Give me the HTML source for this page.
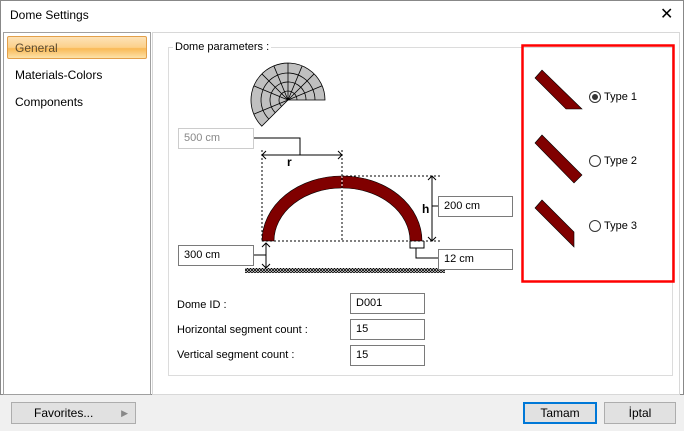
<!DOCTYPE html><html><head><style>
body{margin:0;width:684px;height:431px;background:#f0f0f0;font-family:Tahoma,"Liberation Sans",sans-serif;font-size:11px;color:#000;position:relative;overflow:hidden}
.a{position:absolute}
.box{position:absolute;background:#fff;border:1px solid #7a7a7a;box-sizing:border-box;padding:3px 5px;font-size:11px}
.btn{position:absolute;background:#e1e1e1;border:1px solid #adadad;box-sizing:border-box;text-align:center;line-height:20px;font-size:12px}
</style></head><body>
<div class="a" style="left:0;top:0;width:684px;height:395px;background:#fff;border:1px solid #888;box-sizing:border-box"></div>
<div class="a" style="left:10px;top:8px;font-size:12px">Dome Settings</div>
<div class="a" style="left:660px;top:4px;font-size:16px">✕</div>
<div class="a" style="left:3px;top:32px;width:148px;height:363px;border:1px solid #a0a0a0;box-sizing:border-box;background:#fff"></div>
<div class="a" style="left:7px;top:36px;width:140px;height:23px;border:1px solid #e3a04a;border-radius:2px;box-sizing:border-box;background:linear-gradient(#fde3b8,#fcd08a 50%,#f9b955 55%,#fde2a8)"></div>
<div class="a" style="left:15px;top:41px;font-size:12px;color:#5a4a30">General</div>
<div class="a" style="left:15px;top:68px;font-size:12px">Materials-Colors</div>
<div class="a" style="left:15px;top:95px;font-size:12px">Components</div>
<div class="a" style="left:152px;top:32px;width:528px;height:363px;border:1px solid #d8d8d8;box-sizing:border-box"></div>
<div class="a" style="left:168px;top:47px;width:505px;height:329px;border:1px solid #dcdcdc;box-sizing:border-box"></div>
<div class="a" style="left:173px;top:41px;background:#fff;padding:0 2px">Dome parameters :</div>
<svg class="a" style="left:0;top:0" width="684" height="431">
<defs><pattern id="h" width="3" height="3" patternUnits="userSpaceOnUse"><rect width="3" height="3" fill="#fff"/><path d="M0 3L3 0M0 0L3 3" stroke="#000" stroke-width="0.8"/></pattern></defs>
<g stroke="#000" stroke-width="0.8" fill="#c0c0c0">
<path d="M288 100 L325 100 A37 37 0 1 0 261.8 126.2 Z"/>
<g fill="none"><path d="M297 100A9 9 0 1 0 281.6 106.4M306 100A18 18 0 1 0 275.3 112.7M315 100A27 27 0 1 0 268.9 119.1"/>
<path d="M288 100L322.2 85.8M288 100L314.2 73.8M288 100L302.2 65.8M288 100L288 63M288 100L273.8 65.8M288 100L261.8 73.8M288 100L253.8 85.8M288 100L253.8 114.2"/></g></g>
<path d="M262 241A80 65 0 0 1 422 241L410 241A68 53 0 0 0 274 241Z" fill="#800000" stroke="#000" stroke-width="0.6"/>
<line x1="342" y1="176" x2="342" y2="189" stroke="#fff"/>
<g stroke="#000" stroke-dasharray="2 2" fill="none"><path d="M262 150V241M342 150V241M342 176H440M262 241H440"/></g>
<g stroke="#000" fill="none" stroke-width="1">
<path d="M253 138H300V155M262 155H342M266 159L262 155L266 151M338 159L342 155L338 151"/>
<path d="M432 176V241M428 180L432 176L436 180M428 237L432 241L436 237M432 206H438"/>
<path d="M253 255H266M266 243V268M262 247L266 243L270 247M262 264L266 268L270 264"/>
<path d="M410 241V248H424V241M416 248V258H438"/>
</g>
<rect x="245" y="268" width="200" height="5" fill="url(#h)"/>
<text x="287" y="166" font-family="Liberation Sans" font-weight="bold" font-size="12">r</text>
<text x="422" y="213" font-family="Liberation Sans" font-weight="bold" font-size="12">h</text>
<rect x="522.5" y="45.5" width="151" height="236" fill="none" stroke="#f00" stroke-width="2.5"/>
<g fill="#800000" stroke="#000" stroke-width="0.6">
<path d="M535 78L542 70L582 109L566 109Z"/>
<path d="M535 143L542 135L582 175L574 183Z"/>
<path d="M535 208L542 200L574 232L574 247Z"/>
</g>
<g fill="#fff" stroke="#333"><circle cx="595" cy="97" r="5.5"/><circle cx="595" cy="161" r="5.5"/><circle cx="595" cy="226" r="5.5"/></g>
<circle cx="595" cy="97" r="3" fill="#333"/>
</svg>
<div class="a" style="left:604px;top:91px">Type 1</div>
<div class="a" style="left:604px;top:155px">Type 2</div>
<div class="a" style="left:604px;top:220px">Type 3</div>
<div class="box" style="left:178px;top:128px;width:76px;height:21px;color:#888;border-color:#ccc">500 cm</div>
<div class="box" style="left:438px;top:196px;width:75px;height:21px">200 cm</div>
<div class="box" style="left:178px;top:245px;width:76px;height:21px">300 cm</div>
<div class="box" style="left:438px;top:249px;width:75px;height:21px">12 cm</div>
<div class="a" style="left:177px;top:299px">Dome ID :</div>
<div class="a" style="left:177px;top:324px">Horizontal segment count :</div>
<div class="a" style="left:177px;top:349px">Vertical segment count :</div>
<div class="box" style="left:350px;top:293px;width:75px;height:21px">D001</div>
<div class="box" style="left:350px;top:319px;width:75px;height:21px">15</div>
<div class="box" style="left:350px;top:345px;width:75px;height:21px">15</div>
<div class="btn" style="left:11px;top:402px;width:125px;height:22px;text-align:left;padding-left:22px">Favorites...<span style="position:absolute;right:7px;color:#888;font-size:9px">▶</span></div>
<div class="btn" style="left:523px;top:402px;width:74px;height:22px;border:2px solid #0078d7;line-height:18px">Tamam</div>
<div class="btn" style="left:604px;top:402px;width:72px;height:22px">İptal</div>
</body></html>
